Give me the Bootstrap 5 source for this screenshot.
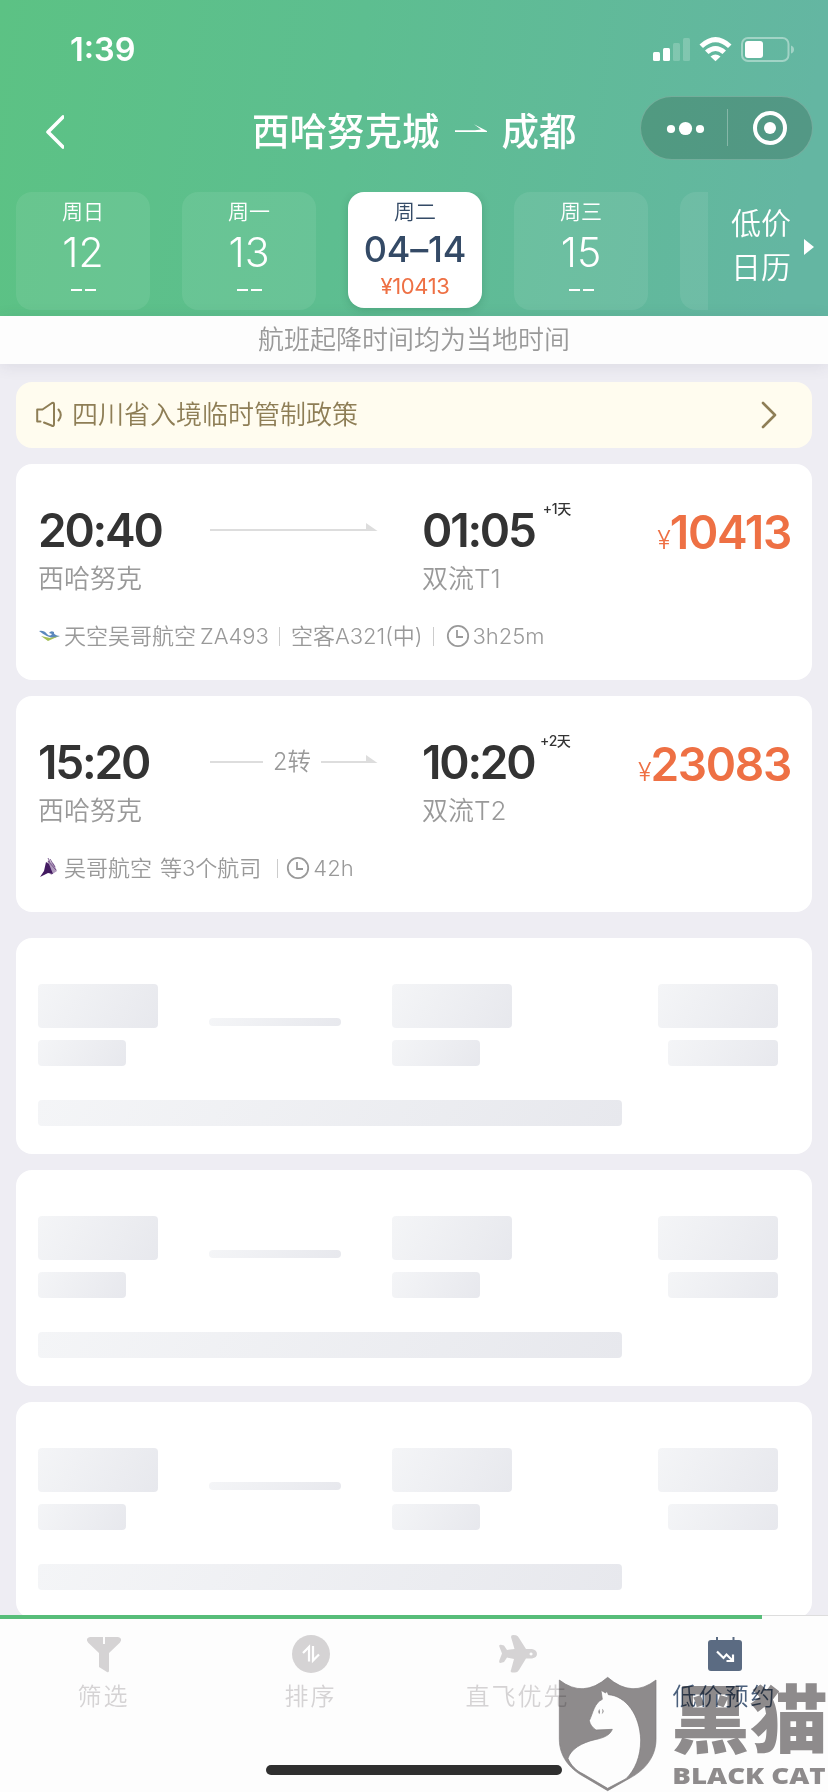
<!DOCTYPE html>
<html lang="zh-CN">
<head>
  <meta charset="UTF-8" />
  <meta name="viewport" content="width=device-width, initial-scale=1" />
  <title>西哈努克城 - 成都</title>
  <link href="https://cdn.jsdelivr.net/npm/bootstrap@5.3.3/dist/css/bootstrap.min.css" rel="stylesheet" />
  <style>
    body {
      width: 828px;
      height: 1792px;
      overflow: hidden;
      background: #eeedf3;
      font-family: Inter, "Noto Sans CJK SC", sans-serif;
      font-weight: 350;
      color: #333;
      line-height: 1;
    }
    svg { display: block; flex-shrink: 0; }

    /* header */
    .top-area {
      height: 316px;
      background: linear-gradient(98deg, #5cc284 0%, #5dbe90 42%, #64b6a2 95%);
      color: #fff;
    }
    .status-bar { height: 96px; padding: 0 34px 0 70px; }
    .clock { font-size: 32.5px; font-weight: 600; line-height: 36px; padding-top: 32px; }
    .status-icons { padding-top: 36px; }
    .nav-line { height: 63px; padding: 0 15px 0 46px; }
    .route { font-size: 37.5px; font-weight: 500; padding: 13px 0 0 188px; gap: 15px; line-height: 46px; }
    .capsule {
      width: 173px;
      height: 64px;
      border-radius: 32px;
      background: rgba(50, 90, 75, .33);
      border: 1px solid rgba(255, 255, 255, .2);
    }
    .date-strip { padding: 33px 0 0 16px; height: 157px; }
    .days { width: 692px; gap: 32px; overflow: hidden; height: 124px; }
    .day {
      width: 134px;
      height: 118px;
      flex: none;
      border-radius: 16px;
      background: rgba(255, 255, 255, .08);
      text-align: center;
      overflow: hidden;
    }
    .day .week { font-size: 21px; line-height: 24px; margin-top: 8px; }
    .day .num { font-size: 41px; line-height: 44px; margin-top: 6px; }
    .day .dashes { display: flex; justify-content: center; gap: 3px; margin-top: 15px; }
    .day .dashes i { width: 11px; height: 2px; background: #fff; }
    .day.picked { background: #fff; color: #344a66; height: 116px; box-shadow: 0 2px 8px rgba(0, 60, 40, .18); }
    .day.picked .num { font-size: 36px; font-weight: 500; line-height: 39px; letter-spacing: -.2px; }
    .day.picked .cost { color: #ee7044; font-size: 22px; font-weight: 400; line-height: 24px; margin-top: 5px; letter-spacing: -.4px; }
    .calendar-link { font-size: 30px; line-height: 44px; margin-left: 23px; padding-top: 9px; }
    .calendar-arrow { margin: 47px 0 0 13px; }

    .notice {
      height: 48px;
      line-height: 47px;
      font-size: 26px;
      color: #999;
      background: #fdfdfd;
      box-shadow: 0 2px 16px rgba(60, 60, 90, .1);
    }

    /* list */
    .list { padding: 18px 16px 0; }
    .policy { height: 66px; border-radius: 16px; background: #fffcef; color: #8e7e56; font-size: 26px; padding: 0 35px 0 20px; margin-bottom: 16px; }
    .policy span { margin-left: 10px; }
    .flight { height: 216px; border-radius: 16px; background: #fff; padding: 43px 22px 0 22px; margin-bottom: 16px; }
    .from { width: 172px; }
    .time { font-size: 46px; font-weight: 600; line-height: 46px; letter-spacing: -2.2px; white-space: nowrap; }
    .city { font-size: 26px; line-height: 32px; margin-top: 10px; color: #999; white-space: nowrap; }
    .way { width: 212px; height: 46px; color: #999; font-size: 23.5px; }
    .way span { padding: 0 10px 0 10px; }
    .plus { position: absolute; right: -36px; top: -6px; font-size: 14px; line-height: 16px; font-weight: 500; letter-spacing: -.4px; }
    .price { color: #ee7044; font-size: 46px; line-height: 50px; font-weight: 600; letter-spacing: -1.3px; margin-right: -1px; }
    .price span { font-size: 25px; font-weight: 350; letter-spacing: -1px; }
    .meta { margin-top: 29px; height: 24px; line-height: 24px; font-size: 22px; color: #999; white-space: nowrap; }
    .airline { margin-left: 3px; }
    .sep { width: 1px; height: 19px; background: #ccc; }
    .sep.far { margin: 0 8px 0 10px; }

    .bones { padding-top: 10px; }
    .bone { height: 216px; border-radius: 16px; background: #fff; padding: 46px 34px 0 22px; margin-bottom: 16px; }
    .bone div div, .bone-bar { background: linear-gradient(120deg, #f4f5f7, #e7e8ed); border-radius: 4px; }
    .bone .col-a { width: 120px; height: 44px; }
    .bone .col-b { width: 88px; height: 26px; }
    .bone .thin { width: 132px; height: 8px; margin: 34px 51px 0; }
    .bone .second { margin-top: 12px; }
    .bone .mid-b { margin-left: 266px; }
    .bone .wide-b { width: 110px; }
    .bone-bar { width: 584px; height: 26px; margin-top: 34px; }

    /* bottom bar */
    .tabs { height: 177px; background: #fdfdfd; border-top: 1px solid #ddd; }
    .loading { width: 762px; height: 4px; background: #57bd79; margin-top: -1px; }
    .tab { width: 207px; color: #d5d3d4; font-size: 24px; letter-spacing: 2px; line-height: 30px; padding-top: 14px; }
    .tab svg { margin: 0 auto 7px; }
    .tab.on { color: #4b607c; }
    .home-bar { width: 296px; height: 10px; border-radius: 5px; background: #2f2f2f; margin: 53px auto 0; }
    .watermark { position: absolute; right: 0; bottom: 0; mix-blend-mode: multiply; pointer-events: none; }
  </style>
</head>
<body class="position-relative">
  <header class="top-area">
    <div class="status-bar d-flex justify-content-between align-items-start">
      <div class="clock">1:39</div>
      <div class="status-icons">
        <svg width="142" height="28" viewBox="652 36 142 28" fill="#fff">
          <rect x="653" y="52" width="7" height="9" rx="1.5" />
          <rect x="663" y="48" width="7" height="13" rx="1.5" />
          <rect x="673" y="43" width="7" height="18" rx="1.5" opacity=".2" />
          <rect x="683" y="38" width="7" height="23" rx="1.5" opacity=".2" />
          <path d="M699.500 44.500 Q715.500 29.500 731.500 44.500 L728 48 Q715.500 36.500 703 48Z" />
          <path d="M705 50.500 Q715.500 41.500 726 50.500 L722.500 54 Q715.500 48 708.500 54Z" />
          <path d="M710.500 56.500 Q715.500 52.500 720.500 56.500 L715.500 61.300Z" />
          <rect x="742" y="38" width="46.500" height="23" rx="6" fill="none" stroke="#fff" stroke-width="2" opacity=".4" />
          <rect x="745" y="41" width="18" height="17" rx="3" />
          <path d="M791 45.500 Q794 46.500 794 49.500 Q794 52.500 791 53.500Z" opacity=".4" />
        </svg>
      </div>
    </div>
    <div class="nav-line d-flex">
      <svg class="mt-3" width="18" height="40" viewBox="46 112 18 40" fill="none" stroke="#fff" stroke-width="3.600">
        <path d="M63 117 L48 132 L63 147" stroke-linecap="round" stroke-linejoin="round" />
      </svg>
      <div class="route d-flex">
        <span>西哈努克城</span>
        <svg width="32" height="46" viewBox="454 109 32 46" fill="#fff">
          <path d="M454 130.300 H474 L480 129.500 L473 124.300 L486 131 V132 H454Z" />
        </svg>
        <span>成都</span>
      </div>
      <div class="capsule ms-auto">
        <svg width="171" height="62" viewBox="641 97 171 62" fill="#fff">
          <circle cx="671" cy="129" r="4.100" />
          <circle cx="685.500" cy="128.500" r="6.600" />
          <circle cx="700" cy="129" r="4.100" />
          <rect x="727" y="109" width="1" height="37" opacity=".3" />
          <circle cx="770" cy="128" r="15" fill="none" stroke="#fff" stroke-width="4" />
          <circle cx="770" cy="128" r="6" />
        </svg>
      </div>
    </div>
    <div class="date-strip d-flex">
      <div class="days d-flex">
        <div class="day"><div class="week">周日</div><div class="num">12</div><div class="dashes"><i></i><i></i></div></div>
        <div class="day"><div class="week">周一</div><div class="num">13</div><div class="dashes"><i></i><i></i></div></div>
        <div class="day picked"><div class="week">周二</div><div class="num">04–14</div><div class="cost">¥10413</div></div>
        <div class="day"><div class="week">周三</div><div class="num">15</div><div class="dashes"><i></i><i></i></div></div>
        <div class="day"></div>
      </div>
      <div class="calendar-link">低价<br />日历</div>
      <svg class="calendar-arrow" width="10" height="16" viewBox="0 0 10 16"><path d="M0 0 L10 8 L0 16Z" fill="#fff" /></svg>
    </div>
  </header>
  <div class="notice text-center position-relative">航班起降时间均为当地时间</div>

  <main class="list">
    <div class="policy d-flex align-items-center">
      <svg width="26" height="28" viewBox="0 0 26 28" fill="none" stroke="#8e7e56" stroke-width="2" stroke-linecap="round" stroke-linejoin="round">
        <path d="M4.500 20.500 H1.200 V8.500 H6.500 L16 2 Q18 1.200 18 3 V23 Q18 25.800 15.500 24.500 L8 21.500" />
        <path d="M22.500 8.500 Q27 14 22.500 19.500" />
      </svg>
      <span>四川省入境临时管制政策</span>
      <svg class="ms-auto" width="16" height="28" viewBox="0 0 16 28" fill="none" stroke="#8e7e56" stroke-width="2.600">
        <path d="M2 2 L14 14 L2 26" stroke-linecap="round" stroke-linejoin="round" />
      </svg>
    </div>

    <div class="flight">
      <div class="d-flex">
        <div class="from"><div class="time">20:40</div><div class="city">西哈努克</div></div>
        <div class="way">
          <svg width="168" height="46" viewBox="0 0 168 46" fill="#ddd"><path d="M0 22 H156 V16 L167.500 24 H0Z" /></svg>
        </div>
        <div>
          <div class="time position-relative d-inline-block">01:05<span class="plus">+1天</span></div>
          <div class="city">双流T1</div>
        </div>
        <div class="price ms-auto"><span>¥</span>10413</div>
      </div>
      <div class="meta d-flex align-items-center">
        <svg width="23" height="12" viewBox="0 0 23 12">
          <path d="M1 1 Q6 0 9 4 Q12 7 14 4 L11 3 Q13 0 16 2 Q15 5 22 6 L16 8 Q10 8 1 1Z" fill="#5b88bd" />
          <path d="M3 6 L12 8 L21 6 L10 11Z" fill="#a4bf55" />
        </svg>
        <span class="airline">天空吴哥航空</span>
        <span class="ms-1">ZA493</span>
        <span class="sep far"></span>
        <span class="airline">空客A321(中)</span>
        <span class="sep far"></span>
        <svg class="ms-1" width="24" height="24" viewBox="0 0 24 24" fill="none" stroke="#999" stroke-width="1.800"><circle cx="12" cy="12" r="10.200" /><path d="M11 6 V13 H17" /></svg>
        <span class="airline">3h25m</span>
      </div>
    </div>

    <div class="flight">
      <div class="d-flex">
        <div class="from"><div class="time">15:20</div><div class="city">西哈努克</div></div>
        <div class="way d-flex align-items-center">
          <svg width="53" height="46" viewBox="0 0 53 46" fill="#ddd"><path d="M0 22 H53 V24 H0Z" /></svg>
          <span class="flex-shrink-0">2转</span>
          <svg width="57" height="46" viewBox="0 0 57 46" fill="#ddd"><path d="M0 22 H45 V16 L56.500 24 H0Z" /></svg>
        </div>
        <div>
          <div class="time position-relative d-inline-block">10:20<span class="plus">+2天</span></div>
          <div class="city">双流T2</div>
        </div>
        <div class="price ms-auto"><span>¥</span>23083</div>
      </div>
      <div class="meta d-flex align-items-center">
        <svg width="23" height="24" viewBox="0 0 23 24">
          <path d="M10 4 L16 8 L19 15 L13 19 L9 10Z" fill="#b09abd" />
          <path d="M10 2 L12 6 M12 3 L17 11 M10 5 L18 14" stroke="#66417c" stroke-width=".8" />
          <path d="M8 6 L11 8 L15 18 L10 17 L4 20 L2 21 L6 15Z" fill="#421a60" />
        </svg>
        <span class="airline">吴哥航空</span>
        <span class="ms-2">等3个航司</span>
        <span class="sep ms-3 me-2"></span>
        <svg width="24" height="24" viewBox="0 0 24 24" fill="none" stroke="#999" stroke-width="1.800"><circle cx="12" cy="12" r="10.200" /><path d="M11 6 V13 H17" /></svg>
        <span class="airline">42h</span>
      </div>
    </div>

    <div id="bones" class="bones"></div>
  </main>

  <footer class="tabs position-absolute bottom-0 start-0 w-100">
    <div class="loading"></div>
    <div class="d-flex text-center">
      <div class="tab">
        <svg width="40" height="42" viewBox="0 0 40 42" fill="#d5d3d4">
          <path d="M6 4 H19 V11 H21 V4 H34 Q39 5 36 9.500 L25 20 V38 Q24.500 40 23 39 L15 34 V20 L4 9.500 Q1 5 6 4Z" />
        </svg>
        <span>筛选</span>
      </div>
      <div class="tab">
        <svg width="40" height="42" viewBox="0 0 40 42">
          <circle cx="20" cy="21" r="19" fill="#d5d3d4" />
          <path d="M12 20 L18 14 V28.500 M22 13 V27.500 L28 21.500" fill="none" stroke="#fff" stroke-width="2.200" />
        </svg>
        <span>排序</span>
      </div>
      <div class="tab">
        <svg width="40" height="42" viewBox="0 0 40 42" fill="#d5d3d4" fill-rule="evenodd">
          <path d="M13 4 Q13 2 15 2 L18 2.300 Q20 3 21 5 L28 16 H34 Q39 17 39 21 Q39 24.500 34 25.500 H28 L21 37 Q19.500 39.500 17 39.500 H14 Q12 39 13 37 L16 26 L9 24.500 L6 29 L2.500 30 Q0.500 30 1.500 27 L4 20.500 L1.500 14 Q0.500 11.500 3 11.800 L6 12.500 L9 17 L16.500 16Z M33 19.500 a1.500 1.500 0 1 0 .1 0Z" />
        </svg>
        <span>直飞优先</span>
      </div>
      <div class="tab on">
        <svg width="40" height="42" viewBox="0 0 40 42">
          <path d="M12 4 V10 M28.500 4 V10" stroke="#5b6b82" stroke-width="2" />
          <rect x="3" y="7" width="34" height="31" rx="3" fill="#5b6b82" />
          <path d="M12 18.500 L18.500 25 L21.500 21.500 L27.500 27.500 M28 21.500 V28 H21.500" fill="none" stroke="#fff" stroke-width="2.200" />
        </svg>
        <span>低价预约</span>
      </div>
    </div>
    <div class="home-bar"></div>
  </footer>

  <svg class="watermark" width="288" height="132" viewBox="0 0 864 396" fill="#8f8c8d">
    <path fill-rule="evenodd" stroke="#7d7a7b" stroke-width="2" d="M58 60 Q130 116 203 52 Q276 116 348 60 V238 C348 290 315 330 270 354 L203 392 L132 350 C85 325 58 285 58 238Z
      M183 91 L187 118 C162 130 160 158 148 182 C150 194 158 203 168 210 L217 208 C210 226 190 234 165 239 C125 248 92 268 84 295 C92 315 108 332 130 342 L203 385 L258 356 C285 330 302 290 302 240 C300 165 258 108 205 104 L201 93 L197 99Z" />
    <path d="M178 147 Q172 156 178 163 Q182 155 178 147Z M186 146 Q197 154 184 163 Q190 156 186 146Z" />
    <text x="394" y="262" font-family="Noto Sans CJK SC, sans-serif" font-weight="900" font-size="222" textLength="470" lengthAdjust="spacingAndGlyphs">黑猫</text>
    <text x="397" y="372" font-family="Open Sans, sans-serif" font-weight="800" font-size="70" textLength="460" lengthAdjust="spacingAndGlyphs">BLACK CAT</text>
  </svg>

  <script src="https://cdn.jsdelivr.net/npm/bootstrap@5.3.3/dist/js/bootstrap.bundle.min.js"></script>
  <script>
    const bones = document.getElementById("bones");
    for (let i = 0; i < 3; i++) {
      const item = document.createElement("section");
      item.className = "bone";
      item.innerHTML = `
        <div class="d-flex">
          <div class="col-a"></div><div class="thin"></div>
          <div class="col-a"></div><div class="col-a ms-auto"></div>
        </div>
        <div class="d-flex second">
          <div class="col-b"></div><div class="col-b mid-b"></div>
          <div class="col-b wide-b ms-auto"></div>
        </div>
        <p class="bone-bar mb-0"></p>`;
      bones.appendChild(item);
    }
  </script>
</body>
</html>
